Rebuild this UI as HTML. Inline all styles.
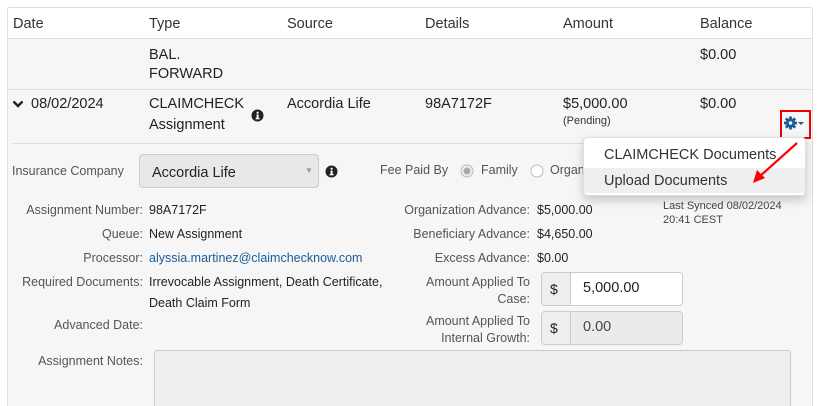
<!DOCTYPE html>
<html><head><meta charset="utf-8"><style>
*{box-sizing:border-box;margin:0;padding:0}
html{width:820px;height:406px;overflow:hidden}
body{width:820px;height:406px;overflow:hidden;background:#fff;font-family:"Liberation Sans",sans-serif;color:#222;position:relative}
.a{position:absolute;white-space:nowrap}
.t{font-size:14.5px;line-height:17px}
.s{font-size:12.5px;line-height:15px;color:#555}
.v{font-size:12.5px;line-height:15px;color:#222}
.r{text-align:right}
</style></head><body>
<div class="a" style="left:7px;top:7px;width:806px;height:399px;border:1px solid #ddd;border-bottom:none;border-radius:3px 3px 0 0;background:#f6f6f6"></div>
<div class="a" style="left:8px;top:8px;width:804px;height:31px;background:#fff;border-bottom:1px solid #ddd"></div>
<div class="a" style="left:8px;top:89px;width:804px;border-top:1px solid #e2e2e2"></div>
<div class="a" style="left:12px;top:143px;width:796px;border-top:1px solid #ddd"></div>

<div class="a t" style="left:13px;top:16px;color:#333">Date</div>
<div class="a t" style="left:149px;top:16px;color:#333">Type</div>
<div class="a t" style="left:287px;top:16px;color:#333">Source</div>
<div class="a t" style="left:425px;top:16px;color:#333">Details</div>
<div class="a t" style="left:563px;top:16px;color:#333">Amount</div>
<div class="a t" style="left:700px;top:16px;color:#333">Balance</div>

<div class="a t" style="left:149px;top:47px">BAL.</div>
<div class="a t" style="left:149px;top:66px">FORWARD</div>
<div class="a t" style="left:700px;top:47px">$0.00</div>

<svg class="a" style="left:12px;top:99px" width="12" height="10" viewBox="0 0 12 10"><path d="M1.5 2.5 L6 7 L10.5 2.5" stroke="#222" stroke-width="2.4" fill="none"/></svg>
<div class="a t" style="left:31px;top:96px">08/02/2024</div>
<div class="a t" style="left:149px;top:96px">CLAIMCHECK</div>
<div class="a t" style="left:149px;top:117px">Assignment</div>
<svg class="a" style="left:251px;top:109px" width="13" height="13"><circle cx="6.5" cy="6.5" r="6" fill="#222"/><rect x="5.6" y="5.5" width="2" height="4.5" fill="#fff"/><rect x="4.6" y="9" width="4" height="1.3" fill="#fff"/><circle cx="6.6" cy="3.7" r="1.1" fill="#fff"/></svg>
<div class="a t" style="left:287px;top:96px">Accordia Life</div>
<div class="a t" style="left:425px;top:96px">98A7172F</div>
<div class="a t" style="left:563px;top:96px">$5,000.00</div>
<div class="a" style="left:563px;top:115px;font-size:11px;color:#333">(Pending)</div>
<div class="a t" style="left:700px;top:96px">$0.00</div>

<div class="a" style="left:780px;top:110px;width:31px;height:29px;border:2px solid #e00"></div>
<svg class="a" style="left:783px;top:115px" width="26" height="16" viewBox="0 0 26 16"><g transform="translate(7.5,8)" fill="#1b5c95"><circle r="4.6"/><g><rect x="-1.4" y="-6.5" width="2.8" height="13"/><rect x="-6.5" y="-1.4" width="13" height="2.8"/><rect x="-1.4" y="-6.5" width="2.8" height="13" transform="rotate(45)"/><rect x="-1.4" y="-6.5" width="2.8" height="13" transform="rotate(-45)"/></g><circle r="1.8" fill="#f6f6f6"/></g><path d="M15 7 L21 7 L18 10 Z" fill="#1b5c95"/></svg>

<div class="a s" style="left:12px;top:164px">Insurance Company</div>
<div class="a" style="left:139px;top:154px;width:180px;height:34px;background:#e8e8e8;border:1px solid #ccc;border-radius:4px"></div>
<div class="a" style="left:152px;top:165px;font-size:14.5px">Accordia Life</div>
<div class="a" style="left:305px;top:166px;font-size:8px;color:#999">▼</div>
<svg class="a" style="left:325px;top:165px" width="13" height="13"><circle cx="6.5" cy="6.5" r="6" fill="#222"/><rect x="5.6" y="5.5" width="2" height="4.5" fill="#fff"/><rect x="4.6" y="9" width="4" height="1.3" fill="#fff"/><circle cx="6.6" cy="3.7" r="1.1" fill="#fff"/></svg>
<div class="a s" style="left:380px;top:163px">Fee Paid By</div>
<svg class="a" style="left:460px;top:164px" width="14" height="14"><circle cx="7" cy="7" r="6" fill="#eee" stroke="#bbb"/><circle cx="7" cy="7" r="3.5" fill="#aaa"/></svg>
<div class="a s" style="left:481px;top:163px">Family</div>
<svg class="a" style="left:530px;top:164px" width="14" height="14"><circle cx="7" cy="7" r="6" fill="#fff" stroke="#bbb"/></svg>
<div class="a s" style="left:550px;top:163px">Organization</div>

<div class="a" style="left:583px;top:137px;width:223px;height:59px;background:#fff;border:1px solid #ddd;border-radius:4px;box-shadow:0 4px 10px rgba(0,0,0,.2)"></div>
<div class="a" style="left:584px;top:168px;width:221px;height:25px;background:#efefef"></div>
<div class="a" style="left:604px;top:147px;font-size:14.5px;color:#333">CLAIMCHECK Documents</div>
<div class="a" style="left:604px;top:173px;font-size:14.5px;color:#333">Upload Documents</div>
<svg class="a" style="left:745px;top:138px" width="60" height="50"><line x1="52" y1="5" x2="14" y2="39" stroke="#f00" stroke-width="2.2"/><path d="M8 45 L12 32 L20 40 Z" fill="#f00"/></svg>

<div class="a" style="left:663px;top:199px;font-size:11px;color:#444;line-height:14px">Last Synced 08/02/2024<br>20:41 CEST</div>

<div class="a s r" style="right:677px;top:203px">Assignment Number:</div>
<div class="a s r" style="right:677px;top:227px">Queue:</div>
<div class="a s r" style="right:677px;top:251px">Processor:</div>
<div class="a s r" style="right:677px;top:275px">Required Documents:</div>
<div class="a s r" style="right:677px;top:318px">Advanced Date:</div>
<div class="a s r" style="right:677px;top:354px">Assignment Notes:</div>
<div class="a v" style="left:149px;top:203px">98A7172F</div>
<div class="a v" style="left:149px;top:227px">New Assignment</div>
<div class="a v" style="left:149px;top:251px;color:#1a5c96">alyssia.martinez@claimchecknow.com</div>
<div class="a v" style="left:149px;top:275px">Irrevocable Assignment, Death Certificate,</div>
<div class="a v" style="left:149px;top:296px">Death Claim Form</div>

<div class="a s r" style="right:290px;top:203px">Organization Advance:</div>
<div class="a s r" style="right:290px;top:227px">Beneficiary Advance:</div>
<div class="a s r" style="right:290px;top:251px">Excess Advance:</div>
<div class="a s r" style="right:290px;top:274px;line-height:17px">Amount Applied To<br>Case:</div>
<div class="a s r" style="right:290px;top:313px;line-height:17px">Amount Applied To<br>Internal Growth:</div>
<div class="a v" style="left:537px;top:203px">$5,000.00</div>
<div class="a v" style="left:537px;top:227px">$4,650.00</div>
<div class="a v" style="left:537px;top:251px">$0.00</div>

<div class="a" style="left:541px;top:272px;width:142px;height:34px;border:1px solid #ccc;border-radius:4px;background:#fff;overflow:hidden"><div style="position:absolute;left:0;top:0;width:29px;height:32px;background:#eee;border-right:1px solid #ccc"></div></div>
<div class="a" style="left:550px;top:281px;font-size:14px">$</div>
<div class="a" style="left:583px;top:280px;font-size:14.5px">5,000.00</div>
<div class="a" style="left:541px;top:311px;width:142px;height:34px;border:1px solid #ccc;border-radius:4px;background:#ebebeb;overflow:hidden"><div style="position:absolute;left:0;top:0;width:29px;height:32px;background:#eee;border-right:1px solid #ccc"></div></div>
<div class="a" style="left:550px;top:320px;font-size:14px">$</div>
<div class="a" style="left:583px;top:319px;font-size:14.5px;color:#444">0.00</div>

<div class="a" style="left:154px;top:350px;width:637px;height:56px;border:1px solid #ccc;border-bottom:none;border-radius:3px 3px 0 0;background:#eee"></div>
</body></html>
